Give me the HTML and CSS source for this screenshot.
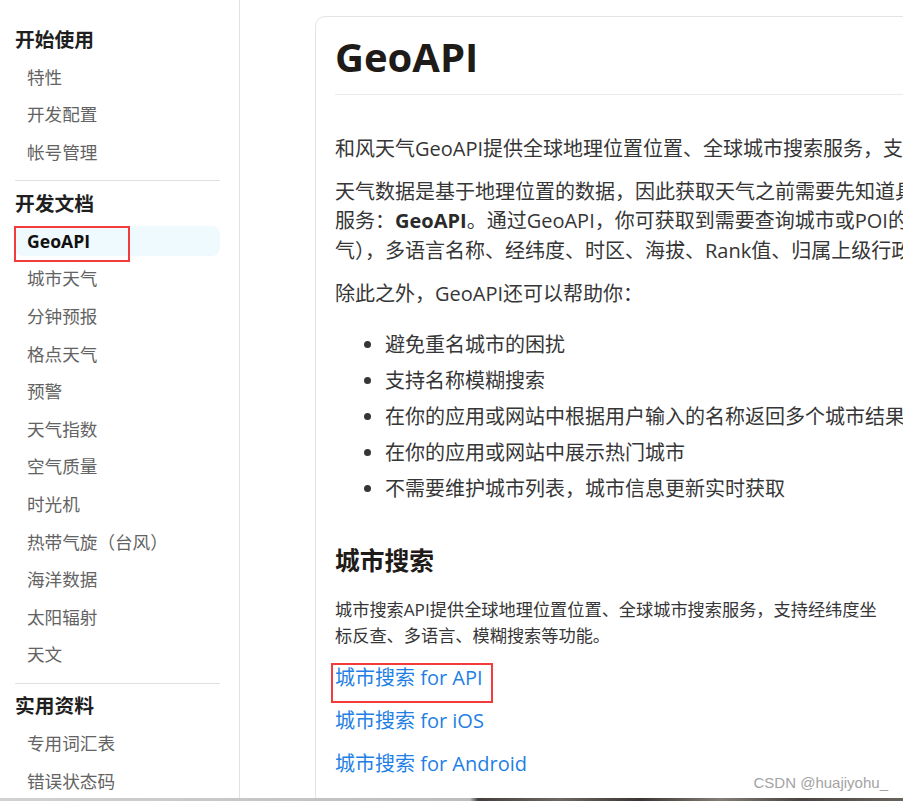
FILE: index.html
```html
<!DOCTYPE html>
<html lang="zh-CN">
<head>
<meta charset="utf-8">
<title>GeoAPI | 和风天气开发服务</title>
<link rel="stylesheet" href="styles.css">
</head>
<body>
<div class="page">
  <aside class="sidebar">
    <nav class="nav-section">
      <div class="nav-title">开始使用</div>
      <a class="nav-item" href="#">特性</a>
      <a class="nav-item" href="#">开发配置</a>
      <a class="nav-item" href="#">帐号管理</a>
    </nav>
    <nav class="nav-section">
      <div class="nav-title">开发文档</div>
      <a class="nav-item active" href="#">GeoAPI<span class="mark mark-nav"></span></a>
      <a class="nav-item" href="#">城市天气</a>
      <a class="nav-item" href="#">分钟预报</a>
      <a class="nav-item" href="#">格点天气</a>
      <a class="nav-item" href="#">预警</a>
      <a class="nav-item" href="#">天气指数</a>
      <a class="nav-item" href="#">空气质量</a>
      <a class="nav-item" href="#">时光机</a>
      <a class="nav-item" href="#">热带气旋（台风）</a>
      <a class="nav-item" href="#">海洋数据</a>
      <a class="nav-item" href="#">太阳辐射</a>
      <a class="nav-item" href="#">天文</a>
    </nav>
    <nav class="nav-section">
      <div class="nav-title">实用资料</div>
      <a class="nav-item" href="#">专用词汇表</a>
      <a class="nav-item" href="#">错误状态码</a>
    </nav>
  </aside>

  <main class="main">
    <article class="card">
      <h1 class="doc-title">GeoAPI</h1>
      <p class="text nowrap">和风天气GeoAPI提供全球地理位置位置、全球城市搜索服务，支持经纬度坐标反查、多语言、模糊搜索等功能。</p>
      <p class="text nowrap"><span class="line">天气数据是基于地理位置的数据，因此获取天气之前需要先知道具体的位置信息。和风天气提供一个功能强大的位置信息搜索API</span><span class="line">服务：<strong>GeoAPI</strong>。通过GeoAPI，你可获取到需要查询城市或POI的基本信息，包括查询地区的Location ID（你需要这个ID去查询天</span><span class="line">气），多语言名称、经纬度、时区、海拔、Rank值、归属上级行政区域、所在行政区域等。</span></p>
      <p class="text">除此之外，GeoAPI还可以帮助你：</p>
      <ul class="bullets">
        <li>避免重名城市的困扰</li>
        <li>支持名称模糊搜索</li>
        <li>在你的应用或网站中根据用户输入的名称返回多个城市结果，便于用户选择准确的城市</li>
        <li>在你的应用或网站中展示热门城市</li>
        <li>不需要维护城市列表，城市信息更新实时获取</li>
      </ul>

      <section class="section">
        <h2 class="section-title">城市搜索</h2>
        <p class="desc">城市搜索API提供全球地理位置位置、全球城市搜索服务，支持经纬度坐标反查、多语言、模糊搜索等功能。</p>
        <p class="link-row"><a class="link" href="#">城市搜索 for API</a><span class="mark mark-link"></span></p>
        <p class="link-row"><a class="link" href="#">城市搜索 for iOS</a></p>
        <p class="link-row"><a class="link" href="#">城市搜索 for Android</a></p>
      </section>
    </article>
  </main>

  <div class="watermark">CSDN @huajiyohu_</div>
  <div class="screen-edge"></div>
</div>
</body>
</html>
```

FILE: styles.css
```css
html, body {
  margin: 0;
  padding: 0;
  overflow: hidden;
}

body {
  width: 903px;
  height: 801px;
  background: #ffffff;
  color: #363636;
  font-family: "Open Sans", "Noto Sans CJK SC", sans-serif;
}

.page {
  position: relative;
  display: flex;
  height: 801px;
  overflow: hidden;
}

/* ---------- sidebar ---------- */
.sidebar {
  flex: none;
  width: 240px;
  box-sizing: border-box;
  border-right: 1px solid #e2e2e2;
  padding: 25px 19px 0 15px;
}

.nav-section {
  display: flex;
  flex-direction: column;
  gap: 7px;
  padding: 7.5px 0 13px;
  border-bottom: 1px solid #e0e0e0;
}

.nav-section:first-child {
  padding-top: 0;
}

.nav-section:last-child {
  border-bottom: none;
}

.nav-title {
  font-size: 19.8px;
  line-height: 29.7px;
  font-weight: 700;
  color: #1f1f1f;
}

.nav-item {
  display: block;
  font-size: 17.6px;
  line-height: 26.4px;
  padding: 2.1px 12px;
  color: #636363;
  text-decoration: none;
  border-radius: 8px;
}

.nav-item.active {
  position: relative;
  background: #effaff;
  color: #111111;
  font-weight: 700;
}

.mark {
  position: absolute;
  box-sizing: border-box;
  border: 2px solid #f23c3c;
  pointer-events: none;
}

.mark-nav {
  left: -1px;
  top: 0;
  width: 116px;
  height: 36px;
}

/* ---------- main ---------- */
.main {
  flex: none;
  padding: 16px 0 0 75px;
}

.card {
  width: 1150px;
  min-height: 900px;
  border: 1px solid #e4e4e4;
  border-radius: 10px;
  padding: 16px 20px 20px 19px;
}

.doc-title {
  margin: 0 0 39px;
  padding-bottom: 13px;
  border-bottom: 1px solid #ebebeb;
  font-size: 40px;
  line-height: 48px;
  font-weight: 700;
  color: #1e1b18;
}

.text {
  margin: 0 0 13px;
  font-size: 20px;
  line-height: 29.7px;
}

.text strong {
  font-weight: 700;
  color: #2a2a2a;
}

.nowrap {
  white-space: nowrap;
}

.line {
  display: block;
}

.bullets {
  margin: 21px 0 0;
  padding-left: 50px;
}

.bullets li {
  font-size: 20px;
  line-height: 29.7px;
  margin-bottom: 6.3px;
  white-space: nowrap;
}

.bullets li:last-child {
  margin-bottom: 0;
}

.section {
  width: 550px;
}

.section-title {
  margin: 41px 0 18.5px;
  font-size: 24.75px;
  line-height: 34.65px;
  font-weight: 700;
  color: #1e1b18;
}

.desc {
  margin: 0 0 13.6px;
  font-size: 17.2px;
  line-height: 25.8px;
}

.link-row {
  position: relative;
  margin: 0 0 13px;
  font-size: 20px;
  line-height: 30px;
}

.link {
  color: #1f7fe5;
  text-decoration: none;
}

.mark-link {
  left: -4px;
  top: 0;
  width: 162px;
  height: 40px;
}

/* ---------- overlays ---------- */
.watermark {
  position: absolute;
  right: 15px;
  top: 774px;
  font-family: "Liberation Sans", Arial, sans-serif;
  font-size: 15px;
  line-height: 18px;
  color: #a3a3a3;
}

.screen-edge {
  position: absolute;
  left: 0;
  right: 0;
  bottom: 0;
  height: 3px;
  background: linear-gradient(90deg, #d2d2d2 0px, #bcbcbc 470px, #45403d 478px, #6d6763 560px, #3b3633 640px, #847d77 720px, #4a4542 800px, #6a645f 903px);
}
```
